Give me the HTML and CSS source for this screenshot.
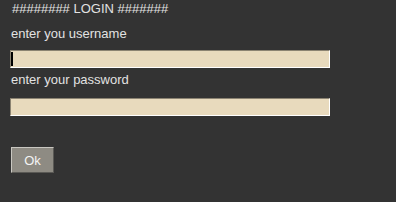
FILE: index.html
```html
<!DOCTYPE html>
<html lang="en">
<head>
    <meta charset="UTF-8">
    <title>Login</title>
    <link rel="stylesheet" href="styles.css">
</head>
<body>
    <form class="login" onsubmit="return false;">
        <div class="title">######## LOGIN #######</div>
        <label class="field-label" for="username">enter you username</label>
        <div class="field-wrap">
            <input type="text" id="username" class="field">
            <span class="caret"></span>
        </div>
        <label class="field-label" for="password">enter your password</label>
        <input type="password" id="password" class="field">
        <button type="submit" class="ok-btn">Ok</button>
    </form>
</body>
</html>
```

FILE: styles.css
```css
body {
    margin: 0;
    padding: 0 10px;
    background-color: #333333;
    color: #e2e2e2;
    font-family: 'Liberation Sans', Arial, sans-serif;
    font-size: 13px;
}

.login {
    display: flex;
    flex-direction: column;
    align-items: flex-start;
    padding-top: 1px;
}

.title {
    line-height: 15px;
    padding-left: 2px;
}

.field-label {
    display: block;
    line-height: 15px;
    padding-left: 1px;
}

.title + .field-label {
    margin-top: 10px;
}

.field-wrap {
    position: relative;
    margin: 9px 0 4px;
}

.field {
    box-sizing: border-box;
    display: block;
    width: 320px;
    height: 18px;
    margin: 0;
    padding: 0 2px;
    background-color: #e8dabd;
    border-style: solid;
    border-width: 1px;
    border-color: #8b8372 #ffffff #ffffff #8b8372;
    caret-color: #000;
    font-family: inherit;
    font-size: 13px;
    outline: none;
}

/* blinking cursor as seen in the focused username box */
.caret {
    position: absolute;
    left: 1px;
    top: 2px;
    width: 2px;
    height: 14px;
    background-color: #000;
}

#password {
    margin-top: 11px;
}

.ok-btn {
    margin-top: 31px;
    margin-left: 1px;
    width: 43px;
    height: 26px;
    padding: 0;
    background-color: #8e8b83;
    color: #f4f4f4;
    font-family: inherit;
    font-size: 13px;
    border-style: solid;
    border-width: 1px;
    border-color: #c9c7c1 #5a5955 #5a5955 #c9c7c1;
    cursor: pointer;
}
```
